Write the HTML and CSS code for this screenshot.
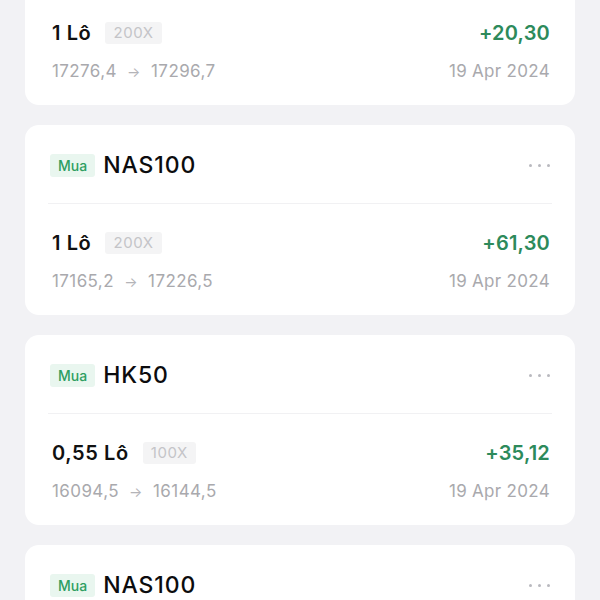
FILE: index.html
```html
<!DOCTYPE html>
<html lang="vi">
<head>
<meta charset="UTF-8">
<meta name="viewport" content="width=device-width, initial-scale=1.0">
<title>Lịch sử giao dịch</title>
<link rel="stylesheet" href="styles.css">
</head>
<body>

<div class="history">

  <!-- card 1, scrolled partly out of view -->
  <div class="trade">
    <div class="trade-head">
      <span class="side">Mua</span>
      <span class="symbol">NAS100</span>
      <span class="more"><i></i><i></i><i></i></span>
    </div>
    <div class="divider"></div>
    <div class="trade-row">
      <span class="lots">1 Lô</span>
      <span class="lev">200X</span>
      <span class="pnl">+20,30</span>
    </div>
    <div class="trade-row sub">
      <span class="prices">17276,4 <span class="arrow">→</span> 17296,7</span>
      <span class="date">19 Apr 2024</span>
    </div>
  </div>

  <div class="trade">
    <div class="trade-head">
      <span class="side">Mua</span>
      <span class="symbol">NAS100</span>
      <span class="more"><i></i><i></i><i></i></span>
    </div>
    <div class="divider"></div>
    <div class="trade-row">
      <span class="lots">1 Lô</span>
      <span class="lev">200X</span>
      <span class="pnl">+61,30</span>
    </div>
    <div class="trade-row sub">
      <span class="prices">17165,2 <span class="arrow">→</span> 17226,5</span>
      <span class="date">19 Apr 2024</span>
    </div>
  </div>

  <div class="trade">
    <div class="trade-head">
      <span class="side">Mua</span>
      <span class="symbol">HK50</span>
      <span class="more"><i></i><i></i><i></i></span>
    </div>
    <div class="divider"></div>
    <div class="trade-row">
      <span class="lots">0,55 Lô</span>
      <span class="lev">100X</span>
      <span class="pnl">+35,12</span>
    </div>
    <div class="trade-row sub">
      <span class="prices">16094,5 <span class="arrow">→</span> 16144,5</span>
      <span class="date">19 Apr 2024</span>
    </div>
  </div>

  <div class="trade">
    <div class="trade-head">
      <span class="side">Mua</span>
      <span class="symbol">NAS100</span>
      <span class="more"><i></i><i></i><i></i></span>
    </div>
    <div class="divider"></div>
    <div class="trade-row">
      <span class="lots">1 Lô</span>
      <span class="lev">200X</span>
      <span class="pnl">+12,00</span>
    </div>
  </div>

</div>

</body>
</html>
```

FILE: styles.css
```css
html, body {
  margin: 0;
  height: 100%;
  overflow: hidden;
}

body {
  background: #f2f2f5;
  font-family: Inter, "Noto Sans", sans-serif;
  color: #111;
}

/* list is scrolled, first card is cut at the top */
.history {
  display: flex;
  flex-direction: column;
  gap: 20px;
  margin-top: -85px;
  padding: 0 25px;
}

.trade {
  background: #fff;
  border-radius: 14px;
  padding: 28px 25px 24px;
  height: 190px;
  box-sizing: border-box;
  flex-shrink: 0;
}

.trade-head {
  display: flex;
  align-items: center;
  height: 24px;
}

.side {
  background: #e9f6ef;
  color: #2f9e62;
  font-size: 14px;
  font-weight: 500;
  padding: 0 8px;
  height: 23px;
  line-height: 23px;
  border-radius: 3px;
}

.symbol {
  font-size: 23px;
  font-weight: 500;
  margin-left: 8px;
  letter-spacing: 0.9px;
  color: #0c0c0e;
}

.more {
  margin-left: auto;
  display: flex;
  gap: 6px;
}
.more i {
  width: 3px;
  height: 3px;
  border-radius: 50%;
  background: #b9b9bf;
}

.divider {
  height: 1px;
  background: #f1f1f3;
  margin: 26px -2px 28px;
}

.trade-row {
  display: flex;
  align-items: center;
  height: 22px;
}

.lots {
  font-size: 20px;
  font-weight: 600;
  letter-spacing: 0.6px;
  margin-left: 2px;
}

.lev {
  background: #f4f4f5;
  color: #c4c4c8;
  font-size: 15px;
  padding: 0 8px;
  height: 22px;
  line-height: 22px;
  margin-left: 14px;
  letter-spacing: 0.6px;
  border-radius: 3px;
}

.pnl {
  margin-left: auto;
  color: #2d8a5b;
  font-size: 20px;
  font-weight: 600;
  letter-spacing: 0.2px;
}

.trade-row.sub {
  margin-top: 17px;
  height: 20px;
  justify-content: space-between;
  color: #a9a9ad;
  font-size: 17px;
}

.prices {
  margin-left: 2px;
  letter-spacing: 0.4px;
}

.date {
  letter-spacing: 0.3px;
}

.arrow {
  font-size: 14px;
  margin: 0 5px;
  color: #b4b4b8;
}
```
